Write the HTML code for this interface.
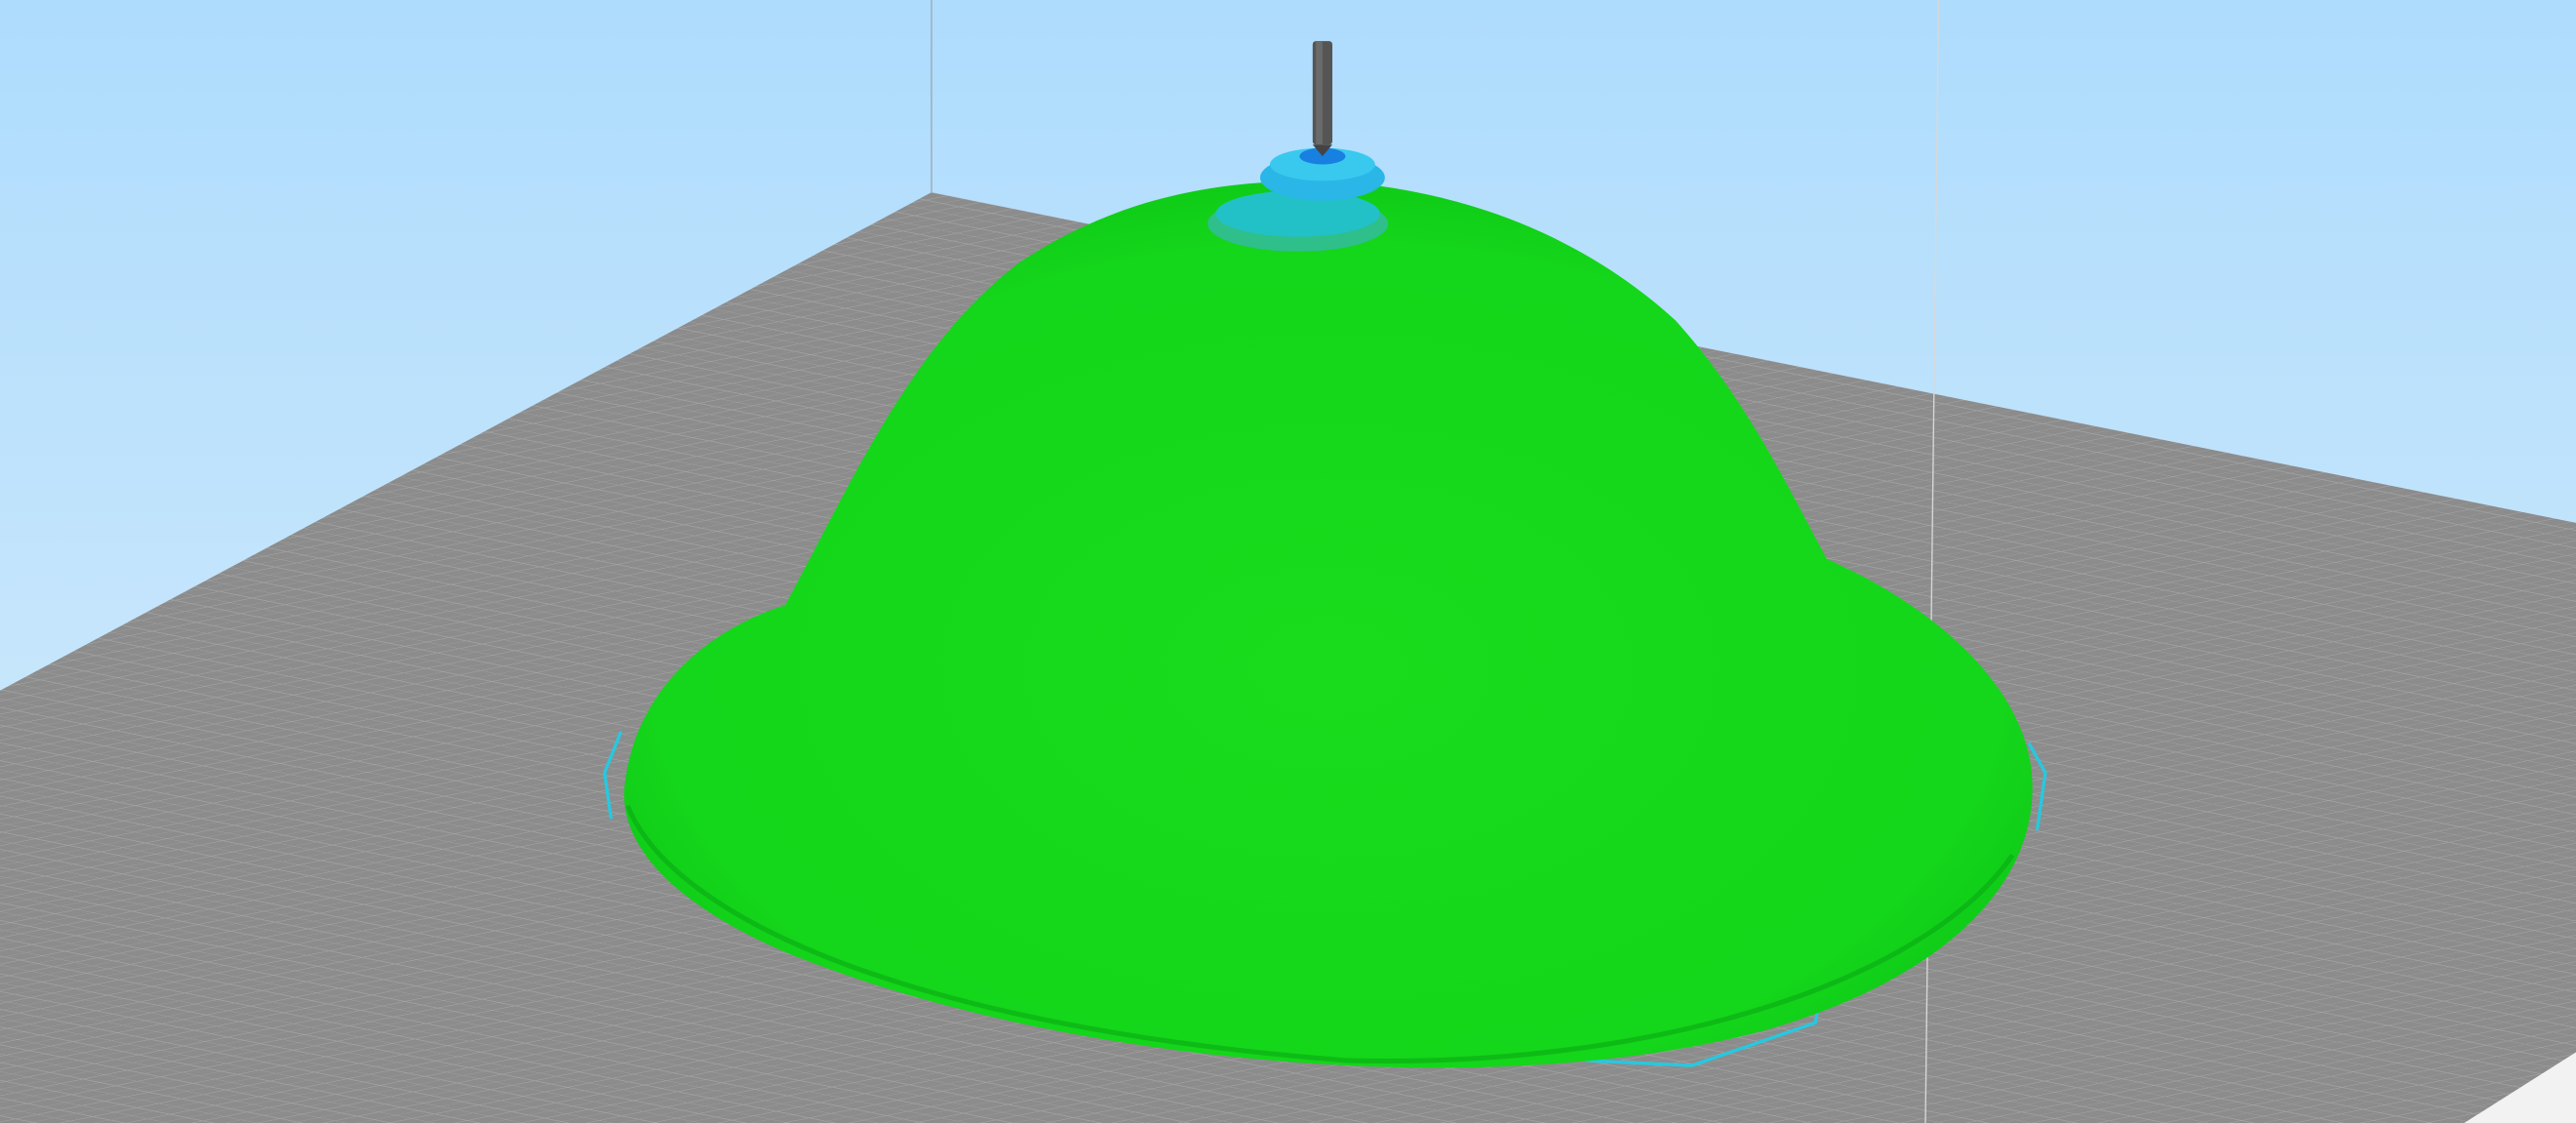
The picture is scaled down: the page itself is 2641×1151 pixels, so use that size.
<!DOCTYPE html>
<html><head><meta charset="utf-8"><style>
html,body{margin:0;padding:0;width:2641px;height:1151px;overflow:hidden;background:#b4defc}
svg{display:block}
</style></head><body>
<svg width="2641" height="1151" viewBox="0 0 1568 683" preserveAspectRatio="none" xmlns="http://www.w3.org/2000/svg">
<defs>
<linearGradient id="sky" x1="0" y1="0" x2="0" y2="1">
<stop offset="0" stop-color="#aedcfd"/><stop offset="1" stop-color="#d6ecfb"/>
</linearGradient>
<radialGradient id="dome" cx="0.5" cy="0.55" r="0.6">
<stop offset="0" stop-color="#18dc1c"/><stop offset="0.8" stop-color="#14d61a"/><stop offset="1" stop-color="#0cc416"/>
</radialGradient>
<pattern id="grid" width="20" height="20" patternUnits="userSpaceOnUse" patternTransform="matrix(1,0.2,-1.35,0.27,567,117)">
<rect width="20" height="20" fill="#8c8c8c"/>
<path d="M0 0H20M0 0V20M10 0V20M0 10H20" stroke="#a2a2a2" stroke-width="0.9" fill="none"/>
</pattern>
</defs>
<rect width="1568" height="683" fill="url(#sky)"/>
<line x1="567" y1="0" x2="567" y2="117" stroke="#9aa9b5" stroke-width="0.8"/>
<polygon points="567,117 1568,318 1568,640 1500,683 0,683 0,420" fill="url(#grid)"/>
<polygon points="1568,640 1500,683 1568,683" fill="#f2f2f2"/>
<line x1="1180" y1="0" x2="1172" y2="683" stroke="#d8d8d8" stroke-width="0.8"/>
<path d="M378,445 L368,470 L372,498" stroke="#27c8e0" stroke-width="2" fill="none"/>
<path d="M1235,452 L1245,470 L1240,505" stroke="#27c8e0" stroke-width="2" fill="none"/>
<path d="M965,645 L1030,648 L1105,622 L1108,605" stroke="#27c8e0" stroke-width="2" fill="none"/>
<path d="M380,480 C385,425 425,385 478,368 C520,290 555,210 620,160 C680,120 740,110 800,110 C880,112 960,140 1020,195 C1065,245 1090,300 1112,340 C1180,370 1235,420 1237,475 C1240,540 1180,595 1080,625 C1000,648 900,652 820,648 C700,642 580,620 480,580 C410,550 378,515 380,480 Z" fill="url(#dome)"/>
<path d="M382,490 C410,560 560,625 820,645 C1000,650 1170,600 1225,520" stroke="#0aa814" stroke-width="3" fill="none" opacity="0.6"/>
<ellipse cx="790" cy="136" rx="55" ry="17" fill="#2fbf8a"/>
<ellipse cx="790" cy="130" rx="50" ry="14" fill="#22c1c8"/>
<ellipse cx="805" cy="108" rx="38" ry="14" fill="#2ab6e6"/>
<ellipse cx="805" cy="100" rx="32" ry="10" fill="#39c9ef"/>
<ellipse cx="805" cy="95" rx="14" ry="5" fill="#1780e0"/>
<rect x="799" y="25" width="12" height="63" rx="2" fill="#555"/>
<rect x="801" y="25" width="4" height="63" fill="#6a6a6a"/>
<polygon points="799,88 811,88 805,95" fill="#444"/>
</svg>
</body></html>
